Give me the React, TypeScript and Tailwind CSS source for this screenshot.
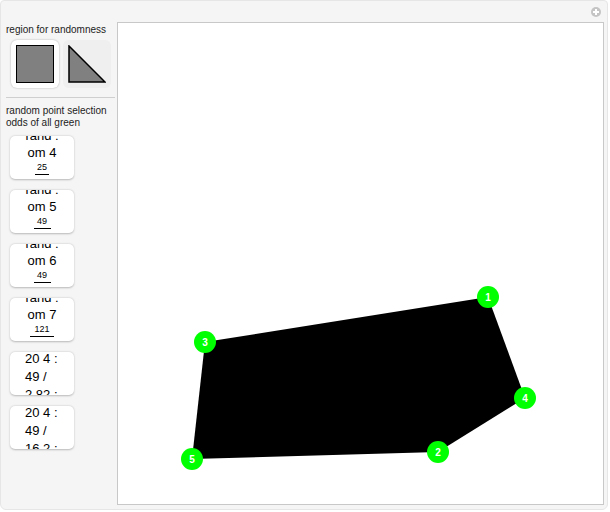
import React from 'react';

const font = { fontFamily: '"Liberation Sans", Arial, sans-serif' };

type Pt = { id: number; x: number; y: number };

// vertex positions relative to the canvas
const POINTS: Pt[] = [
  { id: 1, x: 370, y: 274 },
  { id: 2, x: 320, y: 429 },
  { id: 3, x: 87, y: 319 },
  { id: 4, x: 407, y: 375 },
  { id: 5, x: 74, y: 436 },
];

const HULL = [3, 1, 4, 2, 5];

const FRACTION_CARDS = [
  { n: 4, num: '25', bar: 14 },
  { n: 5, num: '49', bar: 17 },
  { n: 6, num: '49', bar: 17 },
  { n: 7, num: '121', bar: 24 },
];

const TEXT_CARDS = ['2 82 :', '16 2 :'];

function Card({ children }: { children: React.ReactNode }) {
  return (
    <div className="relative h-[43px] w-[64px] overflow-hidden rounded-[5px] bg-white shadow-[0_0.5px_2px_rgba(0,0,0,0.25)]">
      {children}
    </div>
  );
}

export default function App() {
  const hullPts = HULL.map((id) => POINTS.find((p) => p.id === id)!)
    .map((p) => `${p.x},${p.y}`)
    .join(' ');

  return (
    <div className="h-[512px] w-[610px] bg-white" style={font}>
      <div className="relative flex h-[510px] w-[608px] rounded-b-[6px] rounded-t-[4px] border border-[#e6e6e6] bg-[#f5f5f5] pt-[21px]">
        {/* expand button */}
        <div className="absolute right-[6px] top-[6px] flex h-[10px] w-[10px] items-center justify-center rounded-full bg-[#c4c4c4]">
          <div className="relative h-[6px] w-[6px]">
            <div className="absolute left-[2px] top-0 h-[6px] w-[2px] bg-white" />
            <div className="absolute left-0 top-[2px] h-[2px] w-[6px] bg-white" />
          </div>
        </div>

        {/* controls */}
        <div className="flex w-[116px] shrink-0 flex-col pl-[5px] pr-[3px] text-[10px] text-[#222]">
          <div className="mt-[2px] leading-[12px]">region for randomness</div>
          <div className="mt-[4px] flex gap-[4px] pl-[5px]">
            <div className="flex h-[48px] w-[48px] items-center justify-center rounded-[6px] bg-white shadow-[0_0_2px_rgba(0,0,0,0.3)]">
              <div className="h-[38px] w-[38px] border-[1.5px] border-black bg-[#808080]" />
            </div>
            <div className="flex h-[48px] w-[48px] items-center justify-center rounded-[6px] bg-[#efefef]">
              <svg width="38" height="38" viewBox="0 0 38 38">
                <polygon points="1,1 1,37 37,37" fill="#808080" stroke="#000" strokeWidth="1.5" />
              </svg>
            </div>
          </div>
          <div className="mt-[9px] h-px w-[109px] bg-[#cfcfcf]" />
          <div className="mt-[7px] leading-[12px]">
            random point selection
            <br />
            odds of all green
          </div>

          <div className="mt-[7px] flex flex-col gap-[11px] pl-[4px]">
            {FRACTION_CARDS.map((c) => (
              <Card key={c.n}>
                <div className="absolute inset-x-0 top-[-8px] flex flex-col items-center text-black">
                  <div className="text-[13px] leading-[16px]">rand :</div>
                  <div className="mt-[1px] text-[13px] leading-[16px]">om {c.n}</div>
                  <div className="mt-[1px] text-[9px] leading-[11px]">{c.num}</div>
                  <div className="mt-[1px] h-px bg-black" style={{ width: c.bar }} />
                </div>
              </Card>
            ))}
            {TEXT_CARDS.map((t, i) => (
              <Card key={i}>
                <div className="absolute left-[15px] top-[-2px] text-[13px] leading-[18px] text-black">
                  <div>20 4 :</div>
                  <div>49 /</div>
                  <div>{t}</div>
                </div>
              </Card>
            ))}
          </div>
        </div>

        {/* canvas */}
        <div className="h-[483px] w-[487px] border border-[#c8c8c8] bg-white">
          <svg width="485" height="481" viewBox="0 0 485 481">
            <polygon points={hullPts} fill="#000" />
            {POINTS.map((p) => (
              <g key={p.id}>
                <circle cx={p.x} cy={p.y} r="11" fill="#00ff00" />
                <text
                  x={p.x}
                  y={p.y + 3.5}
                  textAnchor="middle"
                  fontSize="10"
                  fontWeight="bold"
                  fill="#fff"
                  fontFamily='"Liberation Sans", Arial, sans-serif'
                >
                  {p.id}
                </text>
              </g>
            ))}
          </svg>
        </div>
      </div>
    </div>
  );
}
